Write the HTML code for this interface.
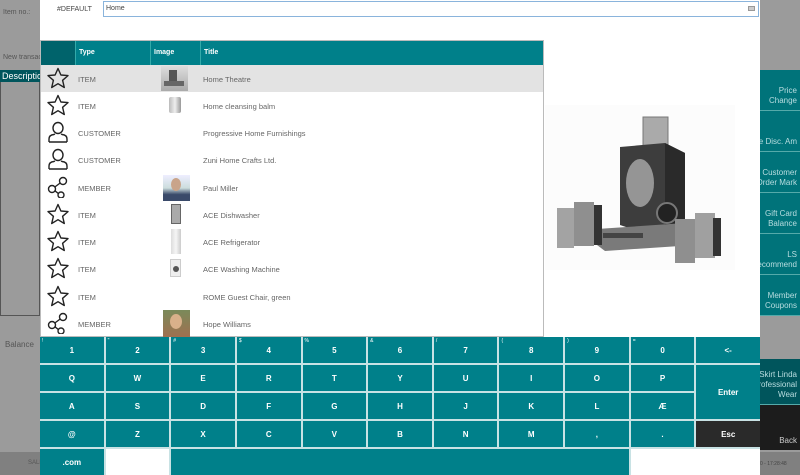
<!DOCTYPE html>
<html><head><meta charset="utf-8"><style>
*{box-sizing:border-box;margin:0;padding:0}
body{width:800px;height:475px;overflow:hidden;position:relative;background:#9b9b9b;font-family:"Liberation Sans",sans-serif;font-size:7px;color:#555}
.abs{position:absolute}
.panel{left:40px;top:0;width:720px;height:475px;background:#fff}
.tbl{left:40px;top:40px;width:504px;height:297px;border:1px solid #bbb;background:#fff}
.hdr{position:absolute;top:0;height:25px;background:#00808a;color:#fff;font-weight:bold;font-size:7px;padding:8px 3px;border-right:1px solid #3aa}
.row{position:absolute;left:0;width:502px;height:27px}
.row span{position:absolute;top:10px;font-size:7.5px;color:#666}
.ic{position:absolute;left:6px;top:2px}
.kb{left:40px;top:337px;width:720px;height:138px;display:grid;grid-template-columns:repeat(11,1fr);grid-template-rows:repeat(5,1fr);gap:2px;background:#c8e2e4}
.k{background:#00808a;color:#fff;font-weight:bold;font-size:8px;display:flex;align-items:center;justify-content:center;position:relative}
.k i{position:absolute;left:2px;top:1px;font-style:normal;font-size:5px;font-weight:normal}
.rb{left:760px;width:40px;background:#00737a;color:#b8dde0;font-size:8px;text-align:right;padding:0 3px;border-bottom:1px solid #5aa;display:flex;flex-direction:column;justify-content:flex-end;padding-bottom:4px;line-height:10px;white-space:nowrap;overflow:hidden;direction:rtl}
</style></head><body>
<div class="abs" style="left:3px;top:9px;font-size:7px;color:#555">Item no.:</div>
<div class="abs" style="left:3px;top:54px;font-size:7px;color:#555;white-space:nowrap">New transac</div>
<div class="abs" style="left:0;top:70px;width:40px;height:246px;border:1px solid #555;background:#9b9b9b"></div>
<div class="abs" style="left:0;top:70px;width:40px;height:12px;background:#00555c;color:#fff;font-size:9px;padding:1px 2px;overflow:hidden;white-space:nowrap">Description</div>
<div class="abs" style="left:5px;top:340px;font-size:8px;color:#555">Balance</div>
<div class="abs" style="left:0;top:452px;width:40px;height:23px;background:#808080;color:#555;font-size:6px;padding:8px 0 0 28px;overflow:hidden">SALE</div>
<div class="abs" style="left:760px;top:452px;width:40px;height:23px;background:#808080;color:#444;font-size:5px;padding:9px 0 0 0;white-space:nowrap;overflow:hidden">0 - 17:28:48</div>

<div class="abs panel"></div>
<div class="abs" style="left:57px;top:6px;font-size:7px;color:#444">#DEFAULT</div>
<div class="abs" style="left:103px;top:1px;width:656px;height:16px;border:1px solid #8ab4dc;font-size:7px;padding:3px 2px;color:#444">Home<span style="position:absolute;right:3px;top:4px;width:7px;height:5px;background:#ccc;border:1px solid #999"></span></div>

<div class="abs tbl">
<div class="hdr" style="left:0;width:35px;background:#00636b"></div>
<div class="hdr" style="left:35px;width:75px">Type</div>
<div class="hdr" style="left:110px;width:50px">Image</div>
<div class="hdr" style="left:160px;width:342px;border-right:none">Title</div>
</div>
<svg width="0" height="0" style="position:absolute"><defs>
<g id="star"><path d="M11 1.5 L13.9 8 L21 8.6 L15.6 13.3 L17.3 20.5 L11 16.7 L4.7 20.5 L6.4 13.3 L1 8.6 L8.1 8 Z" fill="none" stroke="#222" stroke-width="1.4" stroke-linejoin="round"/></g>
<g id="user"><ellipse cx="11" cy="7" rx="5" ry="5.5" fill="none" stroke="#222" stroke-width="1.4"/><path d="M2 21 L2 18 Q2 14 7 13.5 L8 13 M20 21 L20 18 Q20 14 15 13.5 L14 13 M2 21 H20" fill="none" stroke="#222" stroke-width="1.4"/></g>
<g id="share"><circle cx="16" cy="5" r="3.5" fill="none" stroke="#222" stroke-width="1.4"/><circle cx="5" cy="13" r="3.5" fill="none" stroke="#222" stroke-width="1.4"/><circle cx="14" cy="19" r="3" fill="none" stroke="#222" stroke-width="1.4"/><path d="M13.2 7 L7.8 11 M8 14.8 L11.3 17.5" stroke="#222" stroke-width="1.4"/></g>
</defs></svg>
<div class="abs" style="left:41px;top:65px;width:502px;height:272px">
<div class="row" style="top:0;background:#e3e3e3"><svg class="ic" width="22" height="22"><use href="#star"/></svg><span style="left:37px">ITEM</span><div style="position:absolute;left:120px;top:1px;width:27px;height:25px;background:linear-gradient(#ddd,#aaa)"><div style="position:absolute;left:8px;top:4px;width:8px;height:14px;background:#555"></div><div style="position:absolute;left:3px;top:15px;width:20px;height:5px;background:#666"></div></div><span style="left:162px">Home Theatre</span></div>
<div class="row" style="top:27px"><svg class="ic" width="22" height="22"><use href="#star"/></svg><span style="left:37px">ITEM</span><div style="position:absolute;left:128px;top:5px;width:12px;height:16px;background:linear-gradient(90deg,#bbb,#eee,#999);border-radius:2px"></div><span style="left:162px">Home cleansing balm</span></div>
<div class="row" style="top:54px"><svg class="ic" width="22" height="22"><use href="#user"/></svg><span style="left:37px">CUSTOMER</span><span style="left:162px">Progressive Home Furnishings</span></div>
<div class="row" style="top:81px"><svg class="ic" width="22" height="22"><use href="#user"/></svg><span style="left:37px">CUSTOMER</span><span style="left:162px">Zuni Home Crafts Ltd.</span></div>
<div class="row" style="top:109px"><svg class="ic" width="22" height="22"><use href="#share"/></svg><span style="left:37px">MEMBER</span><div style="position:absolute;left:122px;top:1px;width:27px;height:26px;background:linear-gradient(#eef,#cdd 50%,#3a4a6a 75%)"><div style="position:absolute;left:8px;top:3px;width:10px;height:13px;border-radius:50%;background:#c9a48a"></div></div><span style="left:162px">Paul Miller</span></div>
<div class="row" style="top:136px"><svg class="ic" width="22" height="22"><use href="#star"/></svg><span style="left:37px">ITEM</span><div style="position:absolute;left:130px;top:3px;width:10px;height:20px;background:#aaa;border:1px solid #666"></div><span style="left:162px">ACE Dishwasher</span></div>
<div class="row" style="top:163px"><svg class="ic" width="22" height="22"><use href="#star"/></svg><span style="left:37px">ITEM</span><div style="position:absolute;left:130px;top:1px;width:10px;height:25px;background:linear-gradient(90deg,#ddd,#f5f5f5,#ccc)"></div><span style="left:162px">ACE Refrigerator</span></div>
<div class="row" style="top:190px"><svg class="ic" width="22" height="22"><use href="#star"/></svg><span style="left:37px">ITEM</span><div style="position:absolute;left:129px;top:4px;width:11px;height:18px;background:#eee;border:1px solid #ccc"><div style="position:absolute;left:2px;top:6px;width:6px;height:6px;border-radius:50%;background:#555"></div></div><span style="left:162px">ACE Washing Machine</span></div>
<div class="row" style="top:218px"><svg class="ic" width="22" height="22"><use href="#star"/></svg><span style="left:37px">ITEM</span><span style="left:162px">ROME Guest Chair, green</span></div>
<div class="row" style="top:245px"><svg class="ic" width="22" height="22"><use href="#share"/></svg><span style="left:37px">MEMBER</span><div style="position:absolute;left:122px;top:0;width:27px;height:27px;background:linear-gradient(#7a8a5a,#a07050)"><div style="position:absolute;left:7px;top:4px;width:12px;height:15px;border-radius:50%;background:#d9b08a"></div></div><span style="left:162px">Hope Williams</span></div>
</div>

<svg class="abs" style="left:545px;top:105px" width="190" height="165">
<rect x="0" y="0" width="190" height="165" fill="#fcfcfc"/>
<rect x="98" y="12" width="25" height="32" fill="#aaa" stroke="#777"/>
<path d="M75 42 L120 38 L140 48 L140 118 L105 130 L75 120 Z" fill="#3d3d3d"/>
<path d="M120 38 L140 48 L140 118 L120 122 Z" fill="#2a2a2a"/>
<ellipse cx="95" cy="78" rx="14" ry="24" fill="#959595"/>
<circle cx="122" cy="108" r="10" fill="#222" stroke="#777" stroke-width="2"/>
<path d="M52 124 L140 118 L150 126 L150 140 L60 146 L52 140 Z" fill="#7a7a7a"/>
<rect x="58" y="128" width="40" height="5" fill="#444"/>
<rect x="29" y="97" width="20" height="44" fill="#8f8f8f"/><rect x="49" y="100" width="8" height="40" fill="#333"/>
<rect x="12" y="103" width="17" height="40" fill="#a3a3a3"/>
<rect x="150" y="108" width="20" height="45" fill="#a0a0a0"/><rect x="130" y="114" width="20" height="44" fill="#8f8f8f"/>
<rect x="168" y="113" width="8" height="38" fill="#333"/>
</svg>

<div class="abs kb">
<div class="k"><i>!</i>1</div><div class="k"><i>"</i>2</div><div class="k"><i>#</i>3</div><div class="k"><i>$</i>4</div><div class="k"><i>%</i>5</div><div class="k"><i>&amp;</i>6</div><div class="k"><i>/</i>7</div><div class="k"><i>(</i>8</div><div class="k"><i>)</i>9</div><div class="k"><i>=</i>0</div><div class="k">&lt;-</div>
<div class="k">Q</div><div class="k">W</div><div class="k">E</div><div class="k">R</div><div class="k">T</div><div class="k">Y</div><div class="k">U</div><div class="k">I</div><div class="k">O</div><div class="k">P</div><div class="k" style="grid-row:span 2">Enter</div>
<div class="k">A</div><div class="k">S</div><div class="k">D</div><div class="k">F</div><div class="k">G</div><div class="k">H</div><div class="k">J</div><div class="k">K</div><div class="k">L</div><div class="k">Æ</div>
<div class="k">@</div><div class="k">Z</div><div class="k">X</div><div class="k">C</div><div class="k">V</div><div class="k">B</div><div class="k">N</div><div class="k">M</div><div class="k">,</div><div class="k">.</div><div class="k" style="background:#2a2a2a">Esc</div>
<div class="k">.com</div><div class="k" style="background:#fff"></div><div class="k" style="grid-column:span 7"></div><div class="k" style="grid-column:span 2;background:#fff"></div>
</div>

<div class="abs rb" style="top:70px;height:41px"><div>Price</div><div>Change</div></div>
<div class="abs rb" style="top:111px;height:41px"><div>Line Disc. Am.</div></div>
<div class="abs rb" style="top:152px;height:41px"><div>Customer</div><div>Order Mark</div></div>
<div class="abs rb" style="top:193px;height:41px"><div>Gift Card</div><div>Balance</div></div>
<div class="abs rb" style="top:234px;height:41px"><div>LS</div><div>Recommend</div></div>
<div class="abs rb" style="top:275px;height:41px"><div>Member</div><div>Coupons</div></div>
<div class="abs rb" style="top:359px;height:46px;background:#00555c"><div>Skirt Linda</div><div>Professional</div><div>Wear</div></div>
<div class="abs rb" style="top:405px;height:45px;background:#1c1c1c;color:#ccc;border:none"><div>Back</div></div>
</body></html>
